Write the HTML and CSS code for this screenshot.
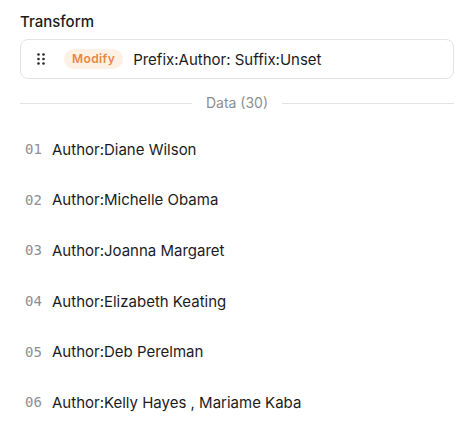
FILE: index.html
```html
<!DOCTYPE html>
<html lang="en">
<head>
  <meta charset="UTF-8">
  <title>Transform</title>
  <link rel="stylesheet" href="styles.css">
</head>
<body>
  <div class="panel">
    <h3 class="panel-title">Transform</h3>

    <!-- transform rule card -->
    <div class="rule">
      <span class="handle">
        <svg width="8" height="12" viewBox="0 0 8 12">
          <circle cx="1.5" cy="1.5" r="1.3"/><circle cx="6.5" cy="1.5" r="1.3"/>
          <circle cx="1.5" cy="6" r="1.3"/><circle cx="6.5" cy="6" r="1.3"/>
          <circle cx="1.5" cy="10.5" r="1.3"/><circle cx="6.5" cy="10.5" r="1.3"/>
        </svg>
      </span>
      <span class="badge">Modify</span>
      <span class="rule-text">Prefix:Author: Suffix:Unset</span>
    </div>

    <div class="divider"><span>Data (30)</span></div>

    <ul class="rows">
      <li><span class="num">01</span>Author:Diane Wilson</li>
      <li><span class="num">02</span>Author:Michelle Obama</li>
      <li><span class="num">03</span>Author:Joanna Margaret</li>
      <li><span class="num">04</span>Author:Elizabeth Keating</li>
      <li><span class="num">05</span>Author:Deb Perelman</li>
      <li><span class="num">06</span>Author:Kelly Hayes , Mariame Kaba</li>
    </ul>
  </div>
</body>
</html>
```

FILE: styles.css
```css
body {
  margin: 0;
  background: #fff;
  font-family: Inter, "Noto Sans", Arial, sans-serif;
  color: #1c1c1e;
}

.panel {
  padding: 12px 20px 0 20px;
}

.panel-title {
  margin: 0 0 7px 0;
  font-size: 15px;
  font-weight: 500;
  line-height: 20px;
}

.rule {
  display: flex;
  align-items: center;
  height: 38px;
  border: 1px solid #e3e3e6;
  border-radius: 8px;
  padding: 0 0 0 16px;
}

.handle {
  display: flex;
  width: 8px;
  margin-right: 19px;
  fill: #2a2a2c;
}

.badge {
  background: #fdf0e4;
  color: #e8883f;
  font-size: 12px;
  font-weight: 600;
  letter-spacing: 0.4px;
  padding: 2px 8px;
  line-height: 16px;
  border-radius: 10px;
  margin-right: 10px;
}

.rule-text {
  font-size: 15px;
}

.divider {
  display: flex;
  align-items: center;
  gap: 14px;
  margin-top: 14px;
  color: #8e8e93;
  font-size: 14px;
  line-height: 20px;
}

.divider::before,
.divider::after {
  content: "";
  flex: 1;
  height: 1px;
  background: #e3e3e6;
}

.rows {
  list-style: none;
  margin: 0;
  padding: 0;
  margin-top: 11px;
}

.rows li {
  display: flex;
  align-items: center;
  height: 50.6px;
  font-size: 15px;
}

.num {
  font-family: "DejaVu Sans Mono", monospace;
  font-size: 14px;
  color: #8e8e93;
  width: 27px;
  padding-left: 5px;
  box-sizing: border-box;
  margin-right: 5px;
}
```
